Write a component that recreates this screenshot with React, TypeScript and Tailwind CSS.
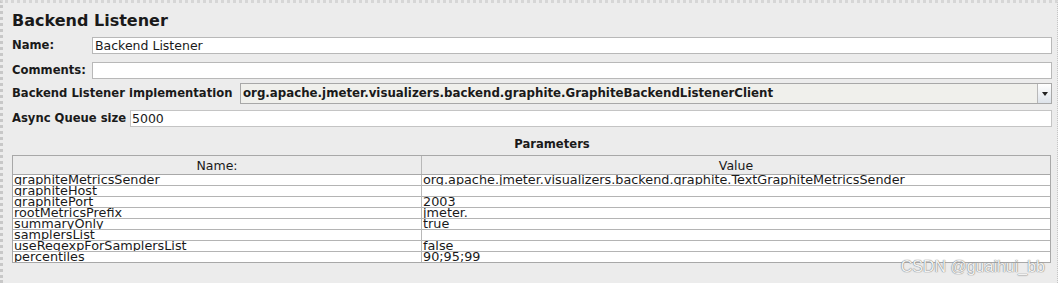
import React from 'react';

const params: [string, string][] = [
  ['graphiteMetricsSender', 'org.apache.jmeter.visualizers.backend.graphite.TextGraphiteMetricsSender'],
  ['graphiteHost', ''],
  ['graphitePort', '2003'],
  ['rootMetricsPrefix', 'jmeter.'],
  ['summaryOnly', 'true'],
  ['samplersList', ''],
  ['useRegexpForSamplersList', 'false'],
  ['percentiles', '90;95;99'],
];

const font = { fontFamily: '"DejaVu Sans", "Liberation Sans", sans-serif' };

export default function App() {
  return (
    <div
      className="w-[1058px] h-[283px] overflow-hidden bg-[#ececec] border-t-[3px] border-t-[#d6d6d6] border-l-[3px] border-l-[#c8c8c8] border-dotted border-r border-r-[#c4c4c4] text-[#1a1a1a]"
      style={font}
    >
      <div className="pl-[9px] pr-[5px]">
        {/* title */}
        <h1 className="text-[16px] font-bold leading-[20px] pt-[8px] h-[34px]">Backend Listener</h1>

        {/* Name */}
        <div className="flex items-center h-[17px]">
          <span className="w-[80px] text-[11.6px] font-bold">Name:</span>
          <div className="flex-1 h-[17px] bg-white border border-[#b8b8b8] px-[2px] text-[12.5px] leading-[15px]">Backend Listener</div>
        </div>

        {/* Comments */}
        <div className="flex items-center h-[17px] mt-[8px]">
          <span className="w-[80px] text-[11.6px] font-bold">Comments:</span>
          <div className="flex-1 h-[17px] bg-white border border-[#b8b8b8]" />
        </div>

        {/* implementation */}
        <div className="flex items-center h-[21px] mt-[4px]">
          <span className="text-[11.6px] font-bold whitespace-nowrap w-[228px]">Backend Listener implementation</span>
          <div className="flex-1 flex h-[21px] bg-[#f0f0ec] border border-[#a8a8a8]">
            <div className="flex-1 px-[2px] text-[11.8px] font-bold leading-[19px] whitespace-nowrap overflow-hidden">
              org.apache.jmeter.visualizers.backend.graphite.GraphiteBackendListenerClient
            </div>
            <div className="w-[14px] border-l border-[#b8b8b8] bg-gradient-to-b from-[#ffffff] to-[#dde3ea] flex items-center justify-center">
              <svg width="6" height="4" viewBox="0 0 6 4"><path d="M0 0h6L3 4z" fill="#222" /></svg>
            </div>
          </div>
        </div>

        {/* Async queue */}
        <div className="flex items-center h-[17px] mt-[6px]">
          <span className="text-[11.6px] font-bold whitespace-nowrap w-[118px]">Async Queue size</span>
          <div className="flex-1 h-[17px] bg-white border border-[#c4c4c4] px-[1px] text-[12.5px] leading-[15px]">5000</div>
        </div>

        {/* Parameters */}
        <div className="text-center text-[11.6px] font-bold leading-[16px] mt-[9px] pl-[40px]">Parameters</div>

        <div className="mt-[3px] mr-[1px] border border-[#a8a8a8] bg-white">
          <div className="grid grid-cols-[409px_1fr] h-[19px] bg-[#ececec] border-b border-[#a8a8a8] text-[12.5px] leading-[19px]">
            <div className="border-r border-[#b8b8b8] text-center h-[18px] overflow-hidden">Name:</div>
            <div className="text-center h-[18px] overflow-hidden">Value</div>
          </div>
          {params.map(([k, v], i) => (
            <div
              key={k}
              className={`grid grid-cols-[409px_1fr] overflow-hidden text-[12.8px] leading-[13px] ${i < params.length - 1 ? 'border-b border-[#b4b4b4] h-[11px]' : 'h-[10px]'}`}
            >
              <div className="border-r border-[#b8b8b8] pl-[1px] overflow-hidden whitespace-nowrap -mt-[2px]">{k}</div>
              <div className="pl-[1px] overflow-hidden whitespace-nowrap -mt-[2px]">{v}</div>
            </div>
          ))}
        </div>

        <div className="flex justify-end pr-[7px] -mt-[4px]">
          <span
            className="relative text-[16px] leading-[16px] text-[#f2f2f2]"
            style={{ fontFamily: '"Liberation Sans", Arial, sans-serif', textShadow: '0 0 1px #7a7a7a, 0 0 1px #7a7a7a' }}
          >
            CSDN @guaihui_bb
          </span>
        </div>
      </div>
    </div>
  );
}
